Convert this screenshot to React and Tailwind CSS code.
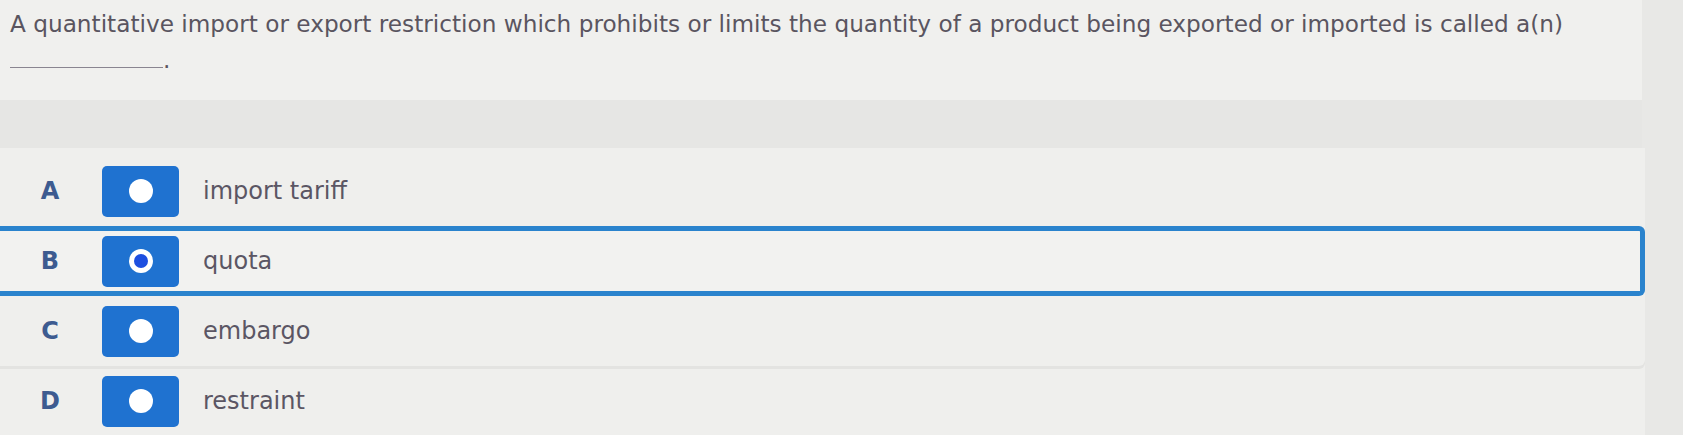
import React from 'react';

const options = [
    { key: 'A', label: 'import tariff' },
    { key: 'B', label: 'quota', selected: true },
    { key: 'C', label: 'embargo' },
    { key: 'D', label: 'restraint' },
];

function Radio({ selected }) {
    return (
        <div className="w-[77px] h-[51px] rounded-[5px] bg-[#1f72d0] flex items-center justify-center shrink-0">
            {selected ? (
                <div className="w-[24px] h-[24px] rounded-full bg-white flex items-center justify-center">
                    <div className="w-[14px] h-[14px] rounded-full bg-[#1d4fe0]" />
                </div>
            ) : (
                <div className="w-[24px] h-[24px] rounded-full bg-white" />
            )}
        </div>
    );
}

export default function App() {
    return (
        <div
            className="w-full h-[435px] overflow-hidden bg-[#e8e8e6]"
            style={{ fontFamily: '"DejaVu Sans", Verdana, sans-serif' }}
        >
            {/* Question */}
            <div className="w-[1642px] h-[100px] bg-[#f0f0ee] pl-[10px] pt-[6px] text-[23.2px] leading-[36px] text-[#5a5560]">
                A quantitative import or export restriction which prohibits or limits the quantity of a product being exported or imported is called a(n)
                <br />
                <span className="inline-block w-[153px] h-0 border-b border-[#8a8590]" />.
            </div>
            <div className="w-[1642px] h-[48px] bg-[#e6e6e4]" />

            {/* Answer choices */}
            <div className="w-[1645px] bg-[#efefed] pt-[8px]">
                {options.map((opt, i) => (
                    <div
                        key={opt.key}
                        className={`h-[70px] flex items-center border-y-[5px] border-r-[5px] rounded-r-[6px] ${
                            opt.selected ? 'border-[#2a83cd] bg-[#f2f2f0]' : 'border-transparent'
                        } ${i === 2 ? 'shadow-[0_3px_0_#e3e3e1]' : ''}`}
                    >
                        <div className="w-[100px] text-center text-[24px] font-bold text-[#3d5b90]">{opt.key}</div>
                        <div className="ml-[2px]">
                            <Radio selected={opt.selected} />
                        </div>
                        <div className="ml-[24px] text-[24px] text-[#5b5664]">{opt.label}</div>
                    </div>
                ))}
            </div>
        </div>
    );
}
